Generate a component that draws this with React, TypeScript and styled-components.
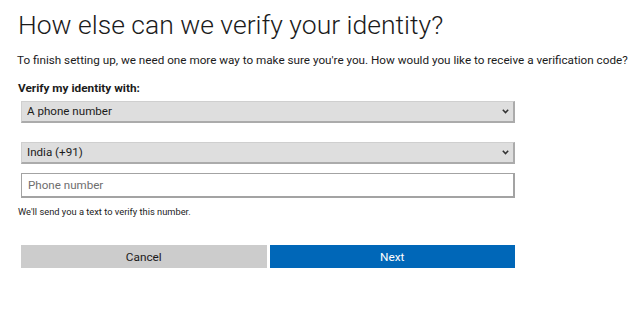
import React from "react";
import styled, { createGlobalStyle } from "styled-components";

const GlobalStyle = createGlobalStyle`
  html, body {
    margin: 0;
    padding: 0;
    background: #fff;
  }
  body {
    font-family: Roboto, "Liberation Sans", Arial, sans-serif;
    color: #1b1b1b;
  }
`;

const Page = styled.div`
  width: 640px;
  height: 309px;
  box-sizing: border-box;
  padding: 8px 0 0 18px;
  overflow: hidden;
`;

const Title = styled.h1`
  margin: 0;
  font-size: 26.5px;
  font-weight: 300;
  line-height: 34px;
  color: #1b1b1b;
`;

const Intro = styled.p`
  margin: 11px 0 0 -1px;
  font-size: 11.7px;
  line-height: 15px;
  white-space: nowrap;
`;

const Label = styled.div`
  margin-top: 13px;
  font-size: 11.8px;
  font-weight: 700;
  line-height: 15px;
`;

const Fields = styled.div`
  width: 494px;
  margin-left: 3px;
  display: flex;
  flex-direction: column;
`;

const SelectWrap = styled.div<{ $top: number }>`
  position: relative;
  margin-top: ${({ $top }) => $top}px;
  height: 22px;
`;

const Select = styled.select`
  appearance: none;
  -webkit-appearance: none;
  width: 100%;
  height: 22px;
  box-sizing: border-box;
  margin: 0;
  padding: 0 24px 0 5px;
  border-style: solid;
  border-width: 1px 2px 2px 1px;
  border-color: #cfcfcf #ababab #ababab #cfcfcf;
  background: #dedede;
  font-family: Roboto, "Liberation Sans", Arial, sans-serif;
  font-size: 11.6px;
  color: #1b1b1b;
  outline: none;
`;

const Chevron = styled.svg`
  position: absolute;
  right: 6px;
  top: 9px;
  width: 7px;
  height: 5px;
  pointer-events: none;
`;

const Input = styled.input`
  margin-top: 10px;
  width: 100%;
  height: 25px;
  box-sizing: border-box;
  padding: 0 6px;
  border-style: solid;
  border-width: 1px 2px 2px 1px;
  border-color: #a3a3a3;
  background: #fff;
  font-family: Roboto, "Liberation Sans", Arial, sans-serif;
  font-size: 11.6px;
  color: #1b1b1b;
  outline: none;
  &::placeholder {
    color: #6e6e6e;
  }
`;

const Hint = styled.div`
  margin: 8px 0 0 -3px;
  font-size: 9.3px;
  line-height: 12px;
  color: #1b1b1b;
`;

const Buttons = styled.div`
  margin-top: 27px;
  display: flex;
  gap: 3px;
`;

const Button = styled.button<{ $primary?: boolean }>`
  flex: 1;
  height: 23px;
  border: none;
  margin: 0;
  padding: 0;
  background: ${({ $primary }) => ($primary ? "#0067b8" : "#cccccc")};
  color: ${({ $primary }) => ($primary ? "#ffffff" : "#1b1b1b")};
  font-family: Roboto, "Liberation Sans", Arial, sans-serif;
  font-size: 11.8px;
`;

const ChevronIcon = () => (
  <Chevron viewBox="0 0 7 5">
    <path d="M0.8 0.8 L3.5 3.6 L6.2 0.8" fill="none" stroke="#333" strokeWidth="1.5" />
  </Chevron>
);

export default function App() {
  return (
    <>
      <GlobalStyle />
      <Page>
        <Title>How else can we verify your identity?</Title>
        <Intro>
          To finish setting up, we need one more way to make sure you're you. How would you like to receive a
          verification code?
        </Intro>
        <Label>Verify my identity with:</Label>
        <Fields>
          <SelectWrap $top={4}>
            <Select defaultValue="phone">
              <option value="phone">A phone number</option>
              <option value="email">An email address</option>
            </Select>
            <ChevronIcon />
          </SelectWrap>
          <SelectWrap $top={19}>
            <Select defaultValue="in">
              <option value="in">India (+91)</option>
            </Select>
            <ChevronIcon />
          </SelectWrap>
          <Input placeholder="Phone number" />
          <Hint>We'll send you a text to verify this number.</Hint>
          <Buttons>
            <Button>Cancel</Button>
            <Button $primary>Next</Button>
          </Buttons>
        </Fields>
      </Page>
    </>
  );
}
